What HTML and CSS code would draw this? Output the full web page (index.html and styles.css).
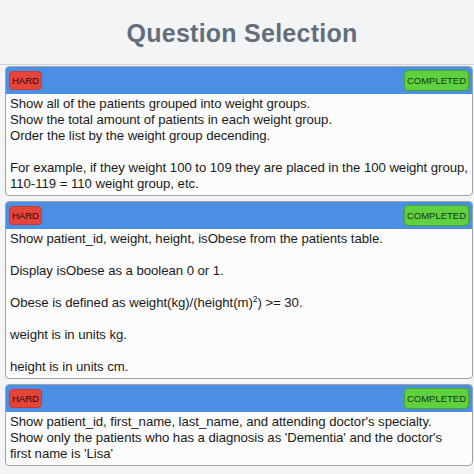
FILE: index.html
```html
<!DOCTYPE html>
<html lang="en">
<head>
  <meta charset="UTF-8">
  <title>Question Selection</title>
  <link rel="stylesheet" href="styles.css">
</head>
<body>
  <header class="page-header">
    <h1>Question Selection</h1>
  </header>
  <main class="question-list">
    <div class="question">
      <div class="question-bar">
        <span class="badge hard">HARD</span>
        <span class="badge done">COMPLETED</span>
      </div>
      <div class="question-text">
        Show all of the patients grouped into weight groups.<br>
        Show the total amount of patients in each weight group.<br>
        Order the list by the weight group decending.<br>
        <br>
        For example, if they weight 100 to 109 they are placed in the 100 weight group, 110-119 = 110 weight group, etc.
      </div>
    </div>
    <div class="question">
      <div class="question-bar">
        <span class="badge hard">HARD</span>
        <span class="badge done">COMPLETED</span>
      </div>
      <div class="question-text">
        Show patient_id, weight, height, isObese from the patients table.<br>
        <br>
        Display isObese as a boolean 0 or 1.<br>
        <br>
        Obese is defined as weight(kg)/(height(m)<sup>2</sup>) &gt;= 30.<br>
        <br>
        weight is in units kg.<br>
        <br>
        height is in units cm.
      </div>
    </div>
    <div class="question">
      <div class="question-bar">
        <span class="badge hard">HARD</span>
        <span class="badge done">COMPLETED</span>
      </div>
      <div class="question-text">
        Show patient_id, first_name, last_name, and attending doctor's specialty.<br>
        Show only the patients who has a diagnosis as 'Dementia' and the doctor's<br>
        first name is 'Lisa'
      </div>
    </div>
  </main>
</body>
</html>
```

FILE: styles.css
```css
body { margin: 0; background: #f3f4f6; font-family: 'Liberation Sans', Arial, sans-serif; color: #1a1a1a; }
.page-header { height: 65px; border-bottom: 1px solid #cfd2d6; display: flex; align-items: center; justify-content: center; padding: 2px 0 0 10px; box-sizing: border-box; }
.page-header h1 { margin: 0; font-size: 25px; font-weight: 700; color: #636e7c; letter-spacing: 0.01em; }
.question-list { display: flex; flex-direction: column; gap: 5px; padding: 1px 1px 0 5px; }
.question { background: #fcfcfc; border: 1px solid #9ea3a8; border-radius: 4px; overflow: hidden; }
.question-bar { background: #4a8fe4; height: 27px; display: flex; align-items: center; justify-content: space-between; padding: 0 3px; }
.badge { font-size: 9.5px; line-height: 17px; padding: 0 2px; border-radius: 4px; border: 1px solid; }
.badge.hard { background: #e5443a; border-color: #c93a32; color: #2a0706; }
.badge.done { background: #5fd03e; border-color: #44a62c; color: #0f3a0a; line-height: 19px; }
.question-text { font-size: 13.2px; line-height: 16px; padding: 2px 1px 3px 4px; letter-spacing: -0.05px; }
.question-text sup { font-size: 8.5px; line-height: 0; }
```
